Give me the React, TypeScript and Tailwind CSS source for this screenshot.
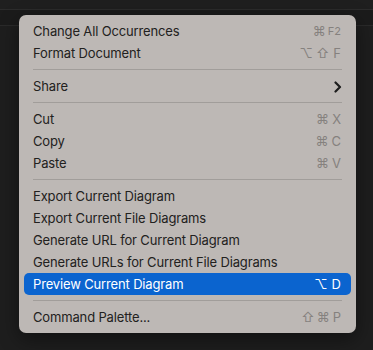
import React from "react";

type Item =
  | { type: "sep" }
  | { type: "item"; label: string; shortcut?: React.ReactNode; active?: boolean; submenu?: boolean };

const Sc = ({ children }: { children: React.ReactNode }) => (
  <span className="flex items-center gap-[2px]">{children}</span>
);

const items: Item[] = [
  {
    type: "item",
    label: "Change All Occurrences",
    shortcut: (
      <Sc>
        <span className="text-[13px]">⌘</span>
        <span className="text-[11px]">F2</span>
      </Sc>
    ),
  },
  {
    type: "item",
    label: "Format Document",
    shortcut: (
      <Sc>
        <span className="text-[13px]">⌥</span>
        <span className="text-[13px] ml-[1px]">⇧</span>
        <span className="text-[13px] ml-[2px]">F</span>
      </Sc>
    ),
  },
  { type: "sep" },
  { type: "item", label: "Share", submenu: true },
  { type: "sep" },
  { type: "item", label: "Cut", shortcut: <Sc><span>⌘</span><span className="ml-[1px]">X</span></Sc> },
  { type: "item", label: "Copy", shortcut: <Sc><span>⌘</span><span className="ml-[1px]">C</span></Sc> },
  { type: "item", label: "Paste", shortcut: <Sc><span>⌘</span><span className="ml-[1px]">V</span></Sc> },
  { type: "sep" },
  { type: "item", label: "Export Current Diagram" },
  { type: "item", label: "Export Current File Diagrams" },
  { type: "item", label: "Generate URL for Current Diagram" },
  { type: "item", label: "Generate URLs for Current File Diagrams" },
  {
    type: "item",
    label: "Preview Current Diagram",
    active: true,
    shortcut: <Sc><span>⌥</span><span className="ml-[2px]">D</span></Sc>,
  },
  { type: "sep" },
  {
    type: "item",
    label: "Command Palette...",
    shortcut: <Sc><span>⇧</span><span>⌘</span><span className="ml-[1px]">P</span></Sc>,
  },
];

export default function App() {
  return (
    <div
      className="relative w-[373px] h-[350px] bg-[#1e1e1e] overflow-hidden"
      style={{ fontFamily: "Inter, 'Noto Sans', 'DejaVu Sans', sans-serif" }}
    >
      <div className="h-[9px] bg-[#1f1f1f]" />
      <div className="h-px bg-[#2c2c2c]" />
      <div className="h-[15px] bg-[#1b1b1b]" />
      <div className="h-px bg-[#2a2a2a]" />

      <div className="absolute left-[19px] top-[15px] w-[337px] rounded-[7px] bg-[#bdb8b5] px-[5px] py-[5px] shadow-[0_6px_20px_rgba(0,0,0,0.45)]">
        {items.map((it, i) =>
          it.type === "sep" ? (
            <div key={i} className="h-[11px] pt-[5px] px-[9px]">
              <div className="h-px bg-[#a19d9a]" />
            </div>
          ) : (
            <div
              key={i}
              className={
                "h-[22px] flex items-center justify-between pl-[9px] pr-[10px] pt-px rounded-[5px] text-[13px] tracking-[-0.15px] " +
                (it.active ? "bg-[#0b64cf] text-white" : "text-[#222120]")
              }
            >
              <span>{it.label}</span>
              {it.submenu ? (
                <svg width="8" height="12" viewBox="0 0 8 12" className="mr-[-1px]">
                  <path d="M1.5 1.5 L6 6 L1.5 10.5" fill="none" stroke="#1d1d1d" strokeWidth="2.2" strokeLinecap="round" strokeLinejoin="round" />
                </svg>
              ) : it.shortcut ? (
                <span className={"text-[13px] tracking-normal " + (it.active ? "text-white" : "text-[#85817e]")}>{it.shortcut}</span>
              ) : null}
            </div>
          )
        )}
      </div>
    </div>
  );
}
